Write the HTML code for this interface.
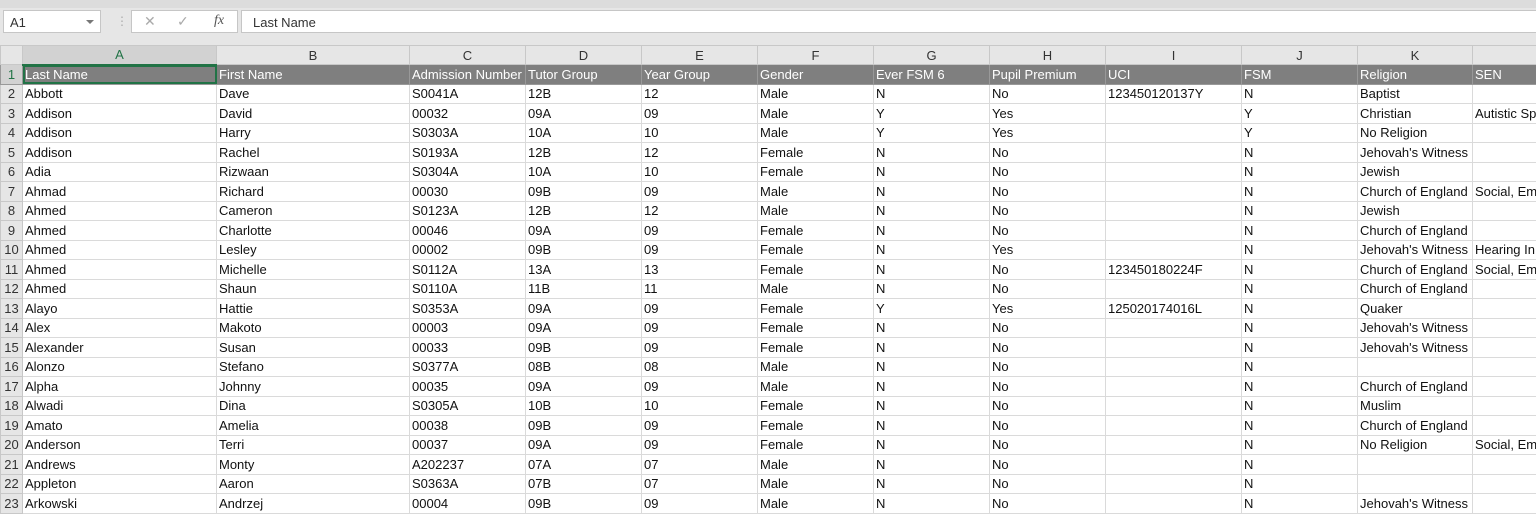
<!DOCTYPE html><html><head><style>
body{margin:0;width:1536px;height:512px;overflow:hidden;background:#fff;font-family:"Liberation Sans",Arial,sans-serif;position:relative}
.top{position:absolute;left:0;top:0;width:1536px;height:45px;background:#e6e6e6}
.top .strip{position:absolute;left:0;top:0;width:1536px;height:8px;background:#dcdcdc}
.nb{position:absolute;left:3px;top:10px;width:98px;height:23px;background:#fff;border:1px solid #c6c6c6;box-sizing:border-box;font-size:13px;color:#333;padding:4px 6px}
.nb:after{content:"";position:absolute;right:6px;top:9px;border:4px solid transparent;border-top:4px solid #777}
.fx{position:absolute;left:131px;top:10px;width:107px;height:23px;background:#fff;border:1px solid #c6c6c6;box-sizing:border-box;color:#aaa;font-size:14px}
.fb{position:absolute;left:241px;top:10px;width:1300px;height:23px;background:#fff;border:1px solid #c6c6c6;box-sizing:border-box;font-size:13px;color:#333;padding:4px 11px}
table{position:absolute;left:0;top:45px;border-collapse:collapse;table-layout:fixed;font-size:13px;width:1552px}
td{box-sizing:border-box;border:1px solid #dadada;height:19.5px;padding:0 0 0 2px;white-space:nowrap;overflow:hidden;color:#111;line-height:17px}
tr.ch td{background:#e6e6e6;text-align:center;color:#333;height:19px;border-color:#c8c8c8;padding:0}
td.rh{background:#e6e6e6;color:#333;text-align:center;padding:0;border-color:#c8c8c8}
tr.h td{background:#7f7f7f;color:#fff;border-color:#999}
tr.h td.rh{background:#d2d2d2;color:#217346}
</style></head><body>
<div class="top"><div class="strip"></div>
<div class="nb">A1</div>
<div style="position:absolute;left:116px;top:14px;color:#aaa;font-size:12px">⋮</div>
<div class="fx"><span style="position:absolute;left:12px;top:2px">✕</span><span style="position:absolute;left:45px;top:2px">✓</span><span style="position:absolute;left:82px;top:2px;color:#555;font-style:italic;font-family:'Liberation Serif',serif">fx</span></div>
<div class="fb">Last Name</div></div>
<table>
<colgroup><col style="width:22px"><col style="width:194px"><col style="width:193px"><col style="width:116px"><col style="width:116px"><col style="width:116px"><col style="width:116px"><col style="width:116px"><col style="width:116px"><col style="width:136px"><col style="width:116px"><col style="width:115px"><col style="width:80px"></colgroup>
<tr class="ch"><td style="background:#e6e6e6"></td><td style="background:#d2d2d2;color:#217346;border-bottom:2px solid #217346">A</td><td>B</td><td>C</td><td>D</td><td>E</td><td>F</td><td>G</td><td>H</td><td>I</td><td>J</td><td>K</td><td></td></tr>
<tr class="h"><td class="rh">1</td><td style="outline:2px solid #217346;outline-offset:-2px">Last Name</td><td>First Name</td><td>Admission Number</td><td>Tutor Group</td><td>Year Group</td><td>Gender</td><td>Ever FSM 6</td><td>Pupil Premium</td><td>UCI</td><td>FSM</td><td>Religion</td><td>SEN</td></tr>
<tr><td class="rh">2</td><td>Abbott</td><td>Dave</td><td>S0041A</td><td>12B</td><td>12</td><td>Male</td><td>N</td><td>No</td><td>123450120137Y</td><td>N</td><td>Baptist</td><td></td></tr>
<tr><td class="rh">3</td><td>Addison</td><td>David</td><td>00032</td><td>09A</td><td>09</td><td>Male</td><td>Y</td><td>Yes</td><td></td><td>Y</td><td>Christian</td><td>Autistic Sp</td></tr>
<tr><td class="rh">4</td><td>Addison</td><td>Harry</td><td>S0303A</td><td>10A</td><td>10</td><td>Male</td><td>Y</td><td>Yes</td><td></td><td>Y</td><td>No Religion</td><td></td></tr>
<tr><td class="rh">5</td><td>Addison</td><td>Rachel</td><td>S0193A</td><td>12B</td><td>12</td><td>Female</td><td>N</td><td>No</td><td></td><td>N</td><td>Jehovah's Witness</td><td></td></tr>
<tr><td class="rh">6</td><td>Adia</td><td>Rizwaan</td><td>S0304A</td><td>10A</td><td>10</td><td>Female</td><td>N</td><td>No</td><td></td><td>N</td><td>Jewish</td><td></td></tr>
<tr><td class="rh">7</td><td>Ahmad</td><td>Richard</td><td>00030</td><td>09B</td><td>09</td><td>Male</td><td>N</td><td>No</td><td></td><td>N</td><td>Church of England</td><td>Social, Em</td></tr>
<tr><td class="rh">8</td><td>Ahmed</td><td>Cameron</td><td>S0123A</td><td>12B</td><td>12</td><td>Male</td><td>N</td><td>No</td><td></td><td>N</td><td>Jewish</td><td></td></tr>
<tr><td class="rh">9</td><td>Ahmed</td><td>Charlotte</td><td>00046</td><td>09A</td><td>09</td><td>Female</td><td>N</td><td>No</td><td></td><td>N</td><td>Church of England</td><td></td></tr>
<tr><td class="rh">10</td><td>Ahmed</td><td>Lesley</td><td>00002</td><td>09B</td><td>09</td><td>Female</td><td>N</td><td>Yes</td><td></td><td>N</td><td>Jehovah's Witness</td><td>Hearing In</td></tr>
<tr><td class="rh">11</td><td>Ahmed</td><td>Michelle</td><td>S0112A</td><td>13A</td><td>13</td><td>Female</td><td>N</td><td>No</td><td>123450180224F</td><td>N</td><td>Church of England</td><td>Social, Em</td></tr>
<tr><td class="rh">12</td><td>Ahmed</td><td>Shaun</td><td>S0110A</td><td>11B</td><td>11</td><td>Male</td><td>N</td><td>No</td><td></td><td>N</td><td>Church of England</td><td></td></tr>
<tr><td class="rh">13</td><td>Alayo</td><td>Hattie</td><td>S0353A</td><td>09A</td><td>09</td><td>Female</td><td>Y</td><td>Yes</td><td>125020174016L</td><td>N</td><td>Quaker</td><td></td></tr>
<tr><td class="rh">14</td><td>Alex</td><td>Makoto</td><td>00003</td><td>09A</td><td>09</td><td>Female</td><td>N</td><td>No</td><td></td><td>N</td><td>Jehovah's Witness</td><td></td></tr>
<tr><td class="rh">15</td><td>Alexander</td><td>Susan</td><td>00033</td><td>09B</td><td>09</td><td>Female</td><td>N</td><td>No</td><td></td><td>N</td><td>Jehovah's Witness</td><td></td></tr>
<tr><td class="rh">16</td><td>Alonzo</td><td>Stefano</td><td>S0377A</td><td>08B</td><td>08</td><td>Male</td><td>N</td><td>No</td><td></td><td>N</td><td></td><td></td></tr>
<tr><td class="rh">17</td><td>Alpha</td><td>Johnny</td><td>00035</td><td>09A</td><td>09</td><td>Male</td><td>N</td><td>No</td><td></td><td>N</td><td>Church of England</td><td></td></tr>
<tr><td class="rh">18</td><td>Alwadi</td><td>Dina</td><td>S0305A</td><td>10B</td><td>10</td><td>Female</td><td>N</td><td>No</td><td></td><td>N</td><td>Muslim</td><td></td></tr>
<tr><td class="rh">19</td><td>Amato</td><td>Amelia</td><td>00038</td><td>09B</td><td>09</td><td>Female</td><td>N</td><td>No</td><td></td><td>N</td><td>Church of England</td><td></td></tr>
<tr><td class="rh">20</td><td>Anderson</td><td>Terri</td><td>00037</td><td>09A</td><td>09</td><td>Female</td><td>N</td><td>No</td><td></td><td>N</td><td>No Religion</td><td>Social, Em</td></tr>
<tr><td class="rh">21</td><td>Andrews</td><td>Monty</td><td>A202237</td><td>07A</td><td>07</td><td>Male</td><td>N</td><td>No</td><td></td><td>N</td><td></td><td></td></tr>
<tr><td class="rh">22</td><td>Appleton</td><td>Aaron</td><td>S0363A</td><td>07B</td><td>07</td><td>Male</td><td>N</td><td>No</td><td></td><td>N</td><td></td><td></td></tr>
<tr><td class="rh">23</td><td>Arkowski</td><td>Andrzej</td><td>00004</td><td>09B</td><td>09</td><td>Male</td><td>N</td><td>No</td><td></td><td>N</td><td>Jehovah's Witness</td><td></td></tr>
</table>
</body></html>
